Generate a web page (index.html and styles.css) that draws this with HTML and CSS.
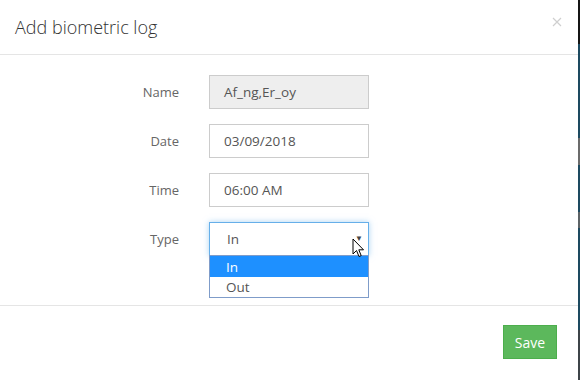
FILE: index.html
```html
<!DOCTYPE html>
<html>
<head>
<meta charset="utf-8">
<link rel="stylesheet" href="styles.css">
</head>
<body>
<div class="screen">
  <div class="modal">
    <div class="modal-header">
      <h4 class="modal-title">Add biometric log</h4>
      <span class="close"><svg width="10" height="10" viewBox="0 0 10 10"><path d="M1 1 L9 9 M9 1 L1 9" stroke="#cfcfcf" stroke-width="1.2" fill="none"/></svg></span>
    </div>
    <div class="modal-body">
      <div class="form-grid">
        <label class="lbl">Name</label>
        <div class="ctl disabled">Af_ng,Er_oy</div>
        <label class="lbl">Date</label>
        <div class="ctl">03/09/2018</div>
        <label class="lbl">Time</label>
        <div class="ctl">06:00&nbsp;AM</div>
        <label class="lbl">Type</label>
        <div class="select-wrap">
          <div class="ctl focus">In<span class="caret">▼</span></div>
          <ul class="options">
            <li class="opt active">In</li>
            <li class="opt">Out</li>
          </ul>
          <svg class="cursor" width="13" height="21" viewBox="0 0 13 21"><path d="M1 1 L1 16 L4.5 12.5 L7 18.5 L9.2 17.6 L6.8 11.8 L11.5 11.8 Z" fill="#fff" stroke="#000" stroke-width="1" stroke-linejoin="miter"/></svg>
        </div>
      </div>
    </div>
    <div class="modal-footer">
      <button class="btn-save">Save</button>
    </div>
  </div>
  <div class="edge"></div>
</div>
</body>
</html>
```
FILE: styles.css
```css
html, body {
  margin: 0;
  padding: 0;
  background: #fff;
}
body {
  font-family: "Open Sans", "Liberation Sans", sans-serif;
  color: #555;
}
.screen {
  display: flex;
  width: 580px;
  height: 380px;
  overflow: hidden;
}
.modal {
  width: 578px;
  background: #fff;
  display: flex;
  flex-direction: column;
}
.edge {
  width: 2px;
  height: 380px;
  background: linear-gradient(to bottom,
    #151515 0, #151515 44px,
    #1d4a60 44px, #1d4a60 138px,
    #6b6b6b 138px, #6b6b6b 165px,
    #1d4a60 165px, #1d4a60 212px,
    #5d6366 212px, #5d6366 228px,
    #1d4a60 228px, #1d4a60 330px,
    #3d4448 330px);
}
.modal-header {
  height: 54px;
  box-sizing: border-box;
  border-bottom: 1px solid #e5e5e5;
  padding: 15px 16px 0 15px;
  display: flex;
  justify-content: space-between;
  align-items: flex-start;
  height: 55px;
}
.modal-title {
  margin: 0;
  font-size: 18px;
  font-weight: 300;
  line-height: 24px;
  color: #333;
}
.close {
  display: block;
  margin-top: 2px;
  line-height: 0;
}
.modal-body {
  padding: 20px 0 0 0;
  height: 251px;
  box-sizing: border-box;
  border-bottom: 1px solid #e5e5e5;
}
.form-grid {
  display: grid;
  grid-template-columns: 179px 160px;
  column-gap: 30px;
  row-gap: 15px;
  grid-auto-rows: 34px;
}
.lbl {
  font-size: 13px;
  color: #666;
  text-align: right;
  line-height: 34px;
}
.ctl {
  box-sizing: border-box;
  height: 34px;
  border: 1px solid #ccc;
  background: #fff;
  font-size: 13.5px;
  line-height: 32px;
  padding-left: 14px;
  color: #555;
  position: relative;
}
.ctl.disabled {
  background: #eee;
}
.select-wrap {
  position: relative;
}
.ctl.focus {
  border-color: #66afe9;
  box-shadow: 0 0 6px rgba(102, 175, 233, 0.55);
  padding-left: 17px;
}
.caret {
  position: absolute;
  right: 5px;
  top: 0;
  font-size: 8px;
  color: #444;
  line-height: 30px;
}
.options {
  position: absolute;
  left: 0;
  top: 33px;
  width: 160px;
  box-sizing: border-box;
  margin: 0;
  padding: 0;
  list-style: none;
  border: 1px solid #7f9cc9;
  background: #fff;
}
.opt {
  height: 20px;
  line-height: 20px;
  padding-left: 16px;
  font-size: 13.5px;
  color: #555;
}
.opt.active {
  background: #1e90ff;
  color: #fff;
  height: 21px;
  line-height: 22px;
}
.cursor {
  position: absolute;
  left: 143px;
  top: 16px;
}
.modal-footer {
  display: flex;
  justify-content: flex-end;
  padding: 19px 21px 0 0;
}
.btn-save {
  width: 54px;
  height: 34px;
  background: #5cb85c;
  border: 1px solid #4cae4c;
  color: #fff;
  font-family: "Open Sans", "Liberation Sans", sans-serif;
  font-size: 14px;
  padding: 0;
  border-radius: 0;
}
```
